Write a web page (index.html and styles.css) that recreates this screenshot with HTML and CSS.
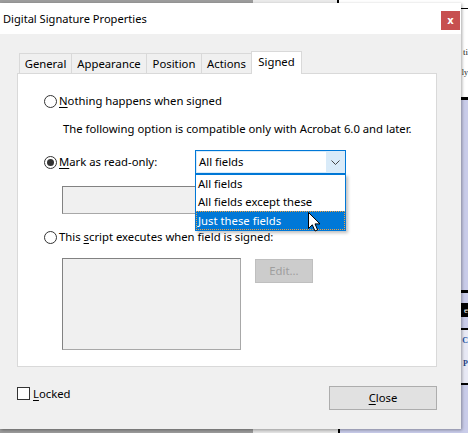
FILE: index.html
```html
<!DOCTYPE html>
<html>
<head>
<meta charset="utf-8">
<link rel="stylesheet" href="styles.css">
</head>
<body>
<div class="strip-top"></div>
<div class="strip-bottom"></div>
<div class="right-col">
  <span class="frag frag-ti">ti</span>
  <span class="frag frag-ly">ly</span>
  <span class="frag frag-e">e</span>
  <span class="frag frag-c">C</span>
  <span class="frag frag-p">P</span>
</div>

<div class="dialog">
  <div class="titlebar">
    <span class="title">Digital Signature Properties</span>
    <div class="close-x">x</div>
  </div>
  <div class="body">
    <div class="tabs">
      <div class="tab tab-general">General</div>
      <div class="tab tab-appearance">Appearance</div>
      <div class="tab tab-position">Position</div>
      <div class="tab tab-actions">Actions</div>
      <div class="tab tab-signed active">Signed</div>
    </div>
    <div class="panel">
      <div class="radio-row row-1">
        <span class="radio"></span>
        <span class="label"><u>N</u>othing happens when signed</span>
      </div>
      <div class="info">The following option is compatible only with Acrobat 6.0 and later.</div>
      <div class="radio-row row-2">
        <span class="radio checked"></span>
        <span class="label label-fixed"><u>M</u>ark as read-only:</span>
        <div class="select">
          <div class="select-value">All fields</div>
          <div class="select-arrow">
            <svg width="9" height="5" viewBox="0 0 9 5"><polyline points="0.5,0.5 4.5,4.5 8.5,0.5" fill="none" stroke="#444" stroke-width="1"/></svg>
          </div>
          <div class="dropdown">
            <div class="opt">All fields</div>
            <div class="opt">All fields except these</div>
            <div class="opt opt-sel">Just these fields</div>
          </div>
        </div>
      </div>
      <div class="field-box"></div>
      <div class="radio-row row-3">
        <span class="radio"></span>
        <span class="label">This <u>s</u>cript executes when field is signed:</span>
      </div>
      <div class="script-row">
        <div class="script-box"></div>
        <div class="edit-btn">Edit...</div>
      </div>
    </div>
    <div class="footer">
      <div class="check-row">
        <span class="checkbox"></span>
        <span class="label"><u>L</u>ocked</span>
      </div>
      <div class="close-btn"><u>C</u>lose</div>
    </div>
  </div>
</div>

<svg class="cursor" width="14" height="21" viewBox="0 0 14 21">
  <path d="M0.5 0.5 L0.5 16.5 L4.3 12.8 L7 19 L9.6 17.9 L7 11.9 L12 11.9 Z" fill="#fff" stroke="#000" stroke-width="1" stroke-linejoin="miter"/>
</svg>
</body>
</html>
```

FILE: styles.css
```css
html, body {
  margin: 0;
  padding: 0;
}
body {
  width: 468px;
  height: 433px;
  overflow: hidden;
  position: relative;
  background: #fff;
  font-family: "Noto Sans", "DejaVu Sans", sans-serif;
  font-size: 11.3px;
  color: #000;
}
u { text-decoration: underline; text-underline-offset: 2px; }

.strip-top {
  position: absolute; left: 0; top: 0; width: 468px; height: 3px;
  background: linear-gradient(to right, #9d9d9d 0 253px, #ebebeb 253px 337px, #000 337px 339px, #fff 339px);
}
.strip-bottom {
  position: absolute; left: 0; top: 429px; width: 468px; height: 4px;
  background: linear-gradient(to right, #9b9b9b 0 253px, #e4e4e4 253px 338px, #000 338px 340px, #c8cbe9 340px);
}
.right-col {
  position: absolute; left: 461px; top: 0; width: 7px; height: 433px; overflow: hidden;
  background: linear-gradient(to bottom, #fff 0 8px, #000 8px 9px, #fff 9px 97px, #000 97px 100px, #c9cce9 100px 290px, #000 290px 293px, #c9cce9 293px 303px, #000 303px 317px, #c9cce9 317px 328px, #000 328px 330px, #e8e9f5 330px 383px, #000 383px 385px, #c9cce9 385px);
}
.frag {
  position: absolute; right: 0;
  font-family: "Liberation Serif", serif; font-size: 9px; line-height: 12px;
}
.frag-ti { top: 46px; color: #222; }
.frag-ly { top: 67px; color: #222; font-size: 8px; }
.frag-e { top: 304px; color: #fff; }
.frag-c { top: 335px; color: #1b4fa0; font-weight: bold; font-size: 8px; }
.frag-p { top: 358px; color: #1b3f80; font-weight: bold; font-size: 8px; }

.dialog {
  position: absolute; left: 0; top: 3px;
  width: 461px; height: 426px;
  background: #f0f0f0;
  display: flex; flex-direction: column;
  box-shadow: 1px 1px 3px rgba(0,0,0,0.35);
}
.titlebar {
  height: 31px; flex: none;
  background: #fff;
  display: flex; align-items: flex-start; justify-content: space-between;
  padding-left: 3px;
}
.title { margin-top: 8px; line-height: 16px; font-size: 11.1px; }
.close-x {
  width: 19px; height: 19px; margin-top: 8px; margin-right: 1px;
  background: #c75050; color: #fff;
  font-family: "DejaVu Sans", sans-serif; font-weight: bold; font-size: 10px;
  display: flex; align-items: center; justify-content: center;
}

.body {
  flex: 1;
  padding: 17px 0 0 17px;
  display: flex; flex-direction: column;
}
.tabs {
  display: flex; align-items: flex-end;
  height: 22px; padding-left: 2px;
  position: relative; z-index: 2;
}
.tab {
  box-sizing: border-box;
  height: 20px;
  border: 1px solid #d9d9d9; border-bottom: none;
  background: #f0f0f0;
  text-align: center;
  line-height: 19px;
  margin-right: -1px;
}
.tab-general { width: 53px; }
.tab-appearance { width: 76px; }
.tab-position { width: 56px; }
.tab-actions { width: 51px; }
.tab.active {
  width: 51px; height: 23px;
  margin-bottom: -1px;
  background: #fff;
  line-height: 19px;
}

.panel {
  box-sizing: border-box;
  width: 420px; height: 294px;
  border: 1px solid #d9d9d9;
  background: #fff;
  padding-top: 19px;
  display: flex; flex-direction: column;
  position: relative;
}
.radio-row {
  display: flex; align-items: center;
  padding-left: 26px;
  height: 16px;
  line-height: 16px;
}
.radio {
  box-sizing: border-box;
  width: 13px; height: 13px; flex: none;
  border: 1px solid #333; border-radius: 50%;
  margin-right: 2px;
  background: #fff;
  display: flex; align-items: center; justify-content: center;
}
.radio.checked::after {
  content: ""; width: 7px; height: 7px; border-radius: 50%; background: #333;
}
.info { margin: 12px 0 0 45px; line-height: 16px; }
.row-2 { margin-top: 13px; height: 24px; }
.label-fixed { width: 136px; flex: none; }

.select {
  position: relative;
  box-sizing: border-box;
  width: 151px; height: 24px;
  border: 1px solid #0078d7;
  background: #d9ebf9;
  display: flex;
  padding: 1px;
}
.select-value {
  flex: 1; background: #fff; line-height: 20px; padding-left: 2px;
}
.select-arrow {
  width: 18px; display: flex; align-items: center; justify-content: center;
}
.dropdown {
  position: absolute; left: -1px; top: 23px;
  box-sizing: border-box;
  width: 151px; height: 57px;
  border: 1px solid #0078d7;
  background: #fff;
  box-shadow: 2px 2px 3px rgba(0,0,0,0.25);
  z-index: 5;
  display: flex; flex-direction: column;
}
.opt { height: 18px; line-height: 18px; padding-left: 2px; }
.opt-sel {
  height: 19px; box-sizing: border-box;
  background: #0078d7; color: #fff;
  border: 1px dotted #f0a040;
  padding-left: 1px; line-height: 17px;
}

.field-box {
  box-sizing: border-box;
  margin: 12px 0 0 44px;
  width: 179px; height: 28px;
  background: #f0f0f0;
  border: 1px solid #a8a8a8;
  border-top-color: #828282; border-left-color: #828282;
}
.row-3 { margin-top: 15px; }
.script-row {
  display: flex; align-items: flex-start;
  margin: 13px 0 0 44px;
}
.script-box {
  box-sizing: border-box;
  width: 179px; height: 92px;
  background: #f0f0f0;
  border: 1px solid #a8a8a8;
  border-top-color: #828282; border-left-color: #828282;
}
.edit-btn {
  box-sizing: border-box;
  width: 58px; height: 24px;
  margin: 1px 0 0 14px;
  background: #cccccc; border: 1px solid #bfbfbf;
  color: #9e9e9e;
  text-align: center; line-height: 22px;
}

.footer {
  display: flex; justify-content: space-between; align-items: flex-start;
  margin-top: 19px; width: 420px;
}
.check-row { display: flex; align-items: center; margin-top: 1px; height: 13px; }
.checkbox {
  box-sizing: border-box; width: 13px; height: 13px;
  border: 1px solid #333; background: #fff; margin-right: 3px;
}
.close-btn {
  box-sizing: border-box;
  width: 108px; height: 24px; margin-right: 0;
  background: #e1e1e1; border: 1px solid #adadad;
  text-align: center; line-height: 22px;
}

.cursor {
  position: absolute; left: 308px; top: 212px; z-index: 10;
}
```
